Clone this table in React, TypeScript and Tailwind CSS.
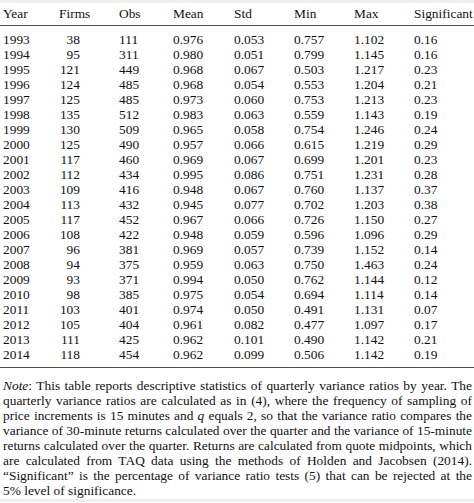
import React from 'react';

const rows: string[][] = [
    ['1993', '38', '111', '0.976', '0.053', '0.757', '1.102', '0.16'],
    ['1994', '95', '311', '0.980', '0.051', '0.799', '1.145', '0.16'],
    ['1995', '121', '449', '0.968', '0.067', '0.503', '1.217', '0.23'],
    ['1996', '124', '485', '0.968', '0.054', '0.553', '1.204', '0.21'],
    ['1997', '125', '485', '0.973', '0.060', '0.753', '1.213', '0.23'],
    ['1998', '135', '512', '0.983', '0.063', '0.559', '1.143', '0.19'],
    ['1999', '130', '509', '0.965', '0.058', '0.754', '1.246', '0.24'],
    ['2000', '125', '490', '0.957', '0.066', '0.615', '1.219', '0.29'],
    ['2001', '117', '460', '0.969', '0.067', '0.699', '1.201', '0.23'],
    ['2002', '112', '434', '0.995', '0.086', '0.751', '1.231', '0.28'],
    ['2003', '109', '416', '0.948', '0.067', '0.760', '1.137', '0.37'],
    ['2004', '113', '432', '0.945', '0.077', '0.702', '1.203', '0.38'],
    ['2005', '117', '452', '0.967', '0.066', '0.726', '1.150', '0.27'],
    ['2006', '108', '422', '0.948', '0.059', '0.596', '1.096', '0.29'],
    ['2007', '96', '381', '0.969', '0.057', '0.739', '1.152', '0.14'],
    ['2008', '94', '375', '0.959', '0.063', '0.750', '1.463', '0.24'],
    ['2009', '93', '371', '0.994', '0.050', '0.762', '1.144', '0.12'],
    ['2010', '98', '385', '0.975', '0.054', '0.694', '1.114', '0.14'],
    ['2011', '103', '401', '0.974', '0.050', '0.491', '1.131', '0.07'],
    ['2012', '105', '404', '0.961', '0.082', '0.477', '1.097', '0.17'],
    ['2013', '111', '425', '0.962', '0.101', '0.490', '1.142', '0.21'],
    ['2014', '118', '454', '0.962', '0.099', '0.506', '1.142', '0.19'],
];

const headers = ['Year', 'Firms', 'Obs', 'Mean', 'Std', 'Min', 'Max', 'Significant'];

const gridCols = 'grid grid-cols-[56px_60px_54px_61px_60px_60px_60px_1fr] pl-[3px]';

const Line: React.FC<{ children: React.ReactNode; last?: boolean }> = ({ children, last }) => (
    <div className={last ? 'text-left' : 'text-justify [text-align-last:justify]'}>{children}</div>
);

export default function App() {
    return (
        <div className="w-[474px] h-[503px] bg-white text-[#111] [font-family:'Liberation_Serif',serif] text-[13.4px] leading-[15px] overflow-hidden">
            <div className="h-[3px] bg-[#efefef]" />

            {/* header */}
            <div className={`${gridCols} pt-[3px] pb-[4px] border-b-[1.5px] border-[#4d4d4d]`}>
                {headers.map((h) => (
                    <div key={h} className="whitespace-nowrap">{h}</div>
                ))}
            </div>

            {/* body */}
            <div className="pt-[6px] pb-[5px] border-b-[1.5px] border-[#4d4d4d]">
                {rows.map((r) => (
                    <div key={r[0]} className={gridCols}>
                        {r.map((v, i) =>
                            i === 1 ? (
                                <div key={i}>
                                    <span className="inline-block w-[21px] text-right">{v}</span>
                                </div>
                            ) : (
                                <div key={i}>{v}</div>
                            )
                        )}
                    </div>
                ))}
            </div>

            {/* note */}
            <div className="pl-[3px] pr-[2px] pt-[10px]">
                <Line>
                    <i>Note</i>: This table reports descriptive statistics of quarterly variance ratios by year. The
                </Line>
                <Line>quarterly variance ratios are calculated as in (4), where the frequency of sampling of</Line>
                <Line>
                    price increments is 15 minutes and <i>q</i> equals 2, so that the variance ratio compares the
                </Line>
                <Line>variance of 30-minute returns calculated over the quarter and the variance of 15-minute</Line>
                <Line>returns calculated over the quarter. Returns are calculated from quote midpoints, which</Line>
                <Line>are calculated from TAQ data using the methods of Holden and Jacobsen (2014).</Line>
                <Line>“Significant” is the percentage of variance ratio tests (5) that can be rejected at the</Line>
                <Line last>5% level of significance.</Line>
            </div>

            <div className="h-[3px] bg-[#efefef] mt-[1px]" />
        </div>
    );
}
